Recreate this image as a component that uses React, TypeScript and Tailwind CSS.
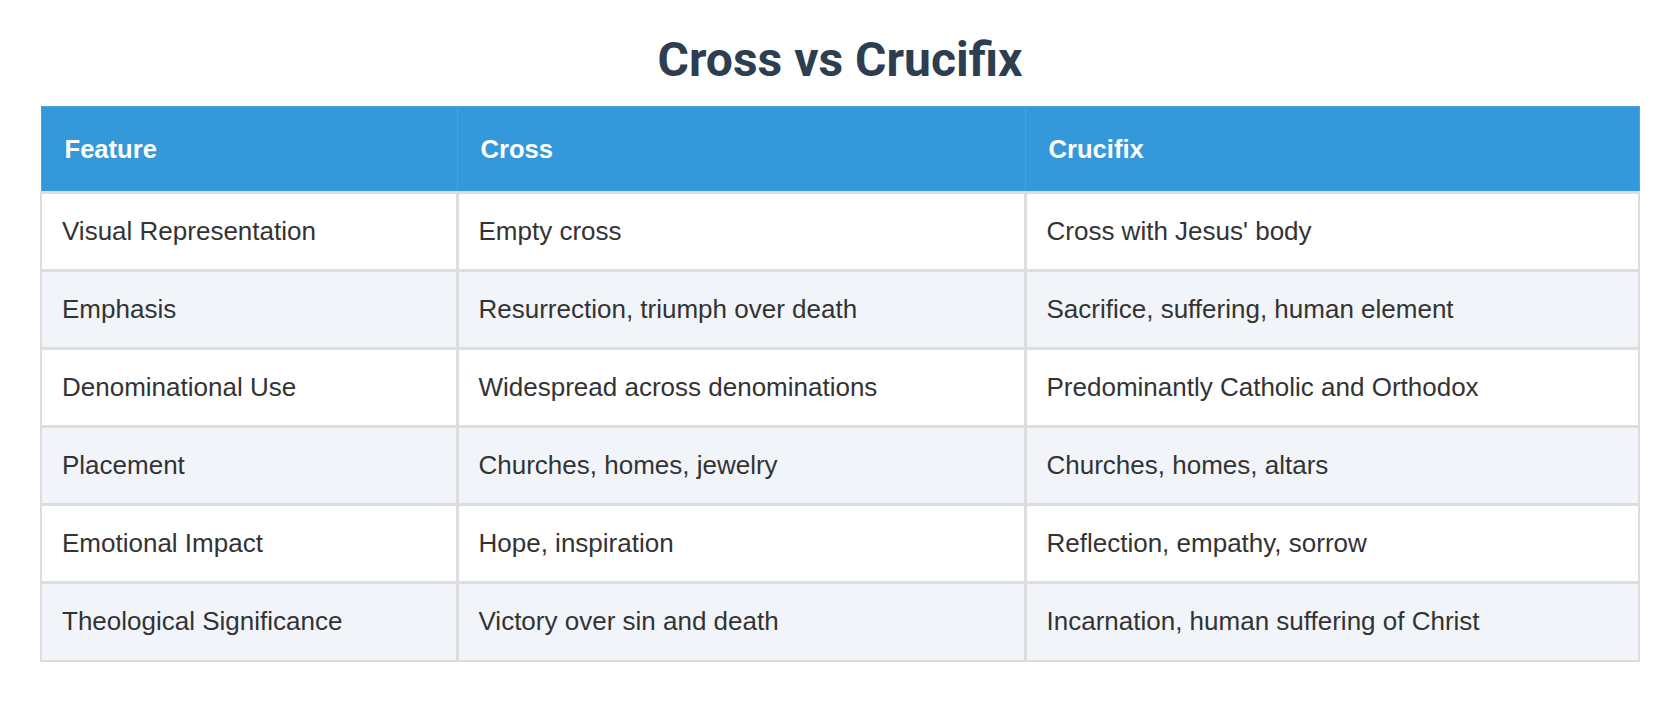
const rows = [
  ['Visual Representation', 'Empty cross', "Cross with Jesus' body"],
  ['Emphasis', 'Resurrection, triumph over death', 'Sacrifice, suffering, human element'],
  ['Denominational Use', 'Widespread across denominations', 'Predominantly Catholic and Orthodox'],
  ['Placement', 'Churches, homes, jewelry', 'Churches, homes, altars'],
  ['Emotional Impact', 'Hope, inspiration', 'Reflection, empathy, sorrow'],
  ['Theological Significance', 'Victory over sin and death', 'Incarnation, human suffering of Christ'],
];

export default function App() {
  return (
    <div className="min-h-[704px] bg-white px-[40px] pt-[32px] font-['Liberation_Sans',Arial,sans-serif]">
      <h1 className="mb-[18px] text-center font-['Roboto',sans-serif] text-[48px] font-bold leading-[56px] text-[#2c3e50]">
        Cross vs Crucifix
      </h1>
      <table className="w-full table-fixed border-collapse text-[26px] text-[#333]">
        <colgroup>
          <col className="w-[416px]" />
          <col className="w-[568px]" />
          <col />
        </colgroup>
        <thead>
          <tr>
            {['Feature', 'Cross', 'Crucifix'].map((h) => (
              <th
                key={h}
                className="h-[86px] border-x border-t border-[#4aa3df] bg-[#3498db] pl-[23px] pr-[20px] text-left text-[25.6px] font-bold text-white"
              >
                {h}
              </th>
            ))}
          </tr>
        </thead>
        <tbody>
          {rows.map((r, i) => (
            <tr key={r[0]} className={i % 2 === 1 ? 'bg-[#f1f5f9]' : 'bg-white'}>
              {r.map((c, j) => (
                <td
                  key={j}
                  className={
                    'h-[78px] border-[3px] border-[#dddddd] px-[20px] align-middle ' +
                    (j === 0 ? 'border-l-2 ' : '') +
                    (j === 2 ? 'border-r-2 ' : '') +
                    (i === rows.length - 1 ? 'border-b-2' : '')
                  }
                >
                  {c}
                </td>
              ))}
            </tr>
          ))}
        </tbody>
      </table>
    </div>
  );
}
